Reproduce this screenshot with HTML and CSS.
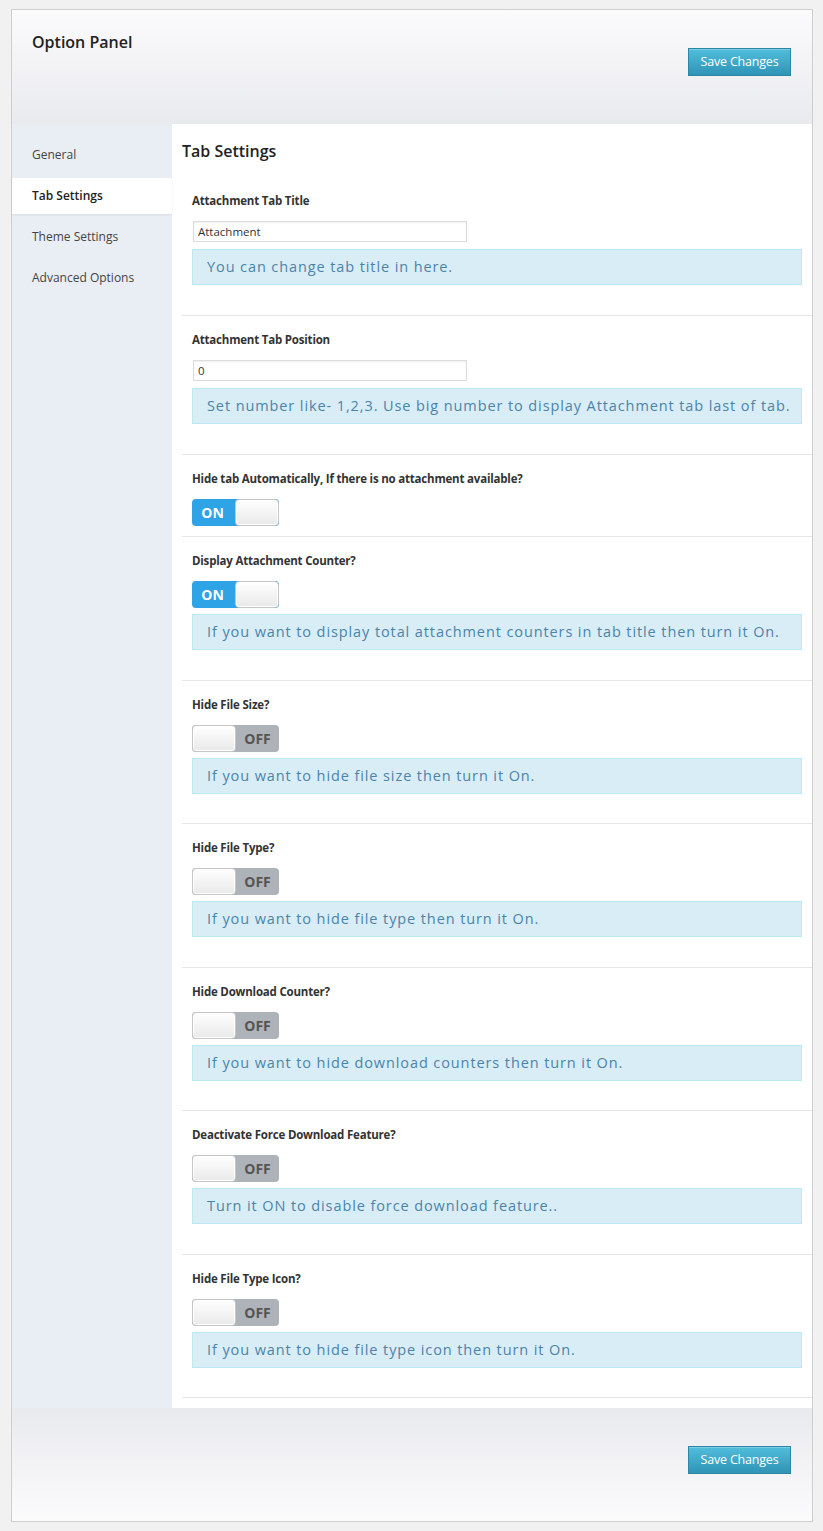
FILE: index.html
```html
<!DOCTYPE html>
<html>
<head>
<meta charset="utf-8">
<title>Option Panel</title>
<link rel="stylesheet" href="styles.css">
</head>
<body>
<div class="panel">
  <header class="panel-header">
    <h1 class="panel-title">Option Panel</h1>
    <button class="btn-save">Save Changes</button>
  </header>
  <div class="panel-body">
    <nav class="sidebar">
      <div class="nav-item">General</div>
      <div class="nav-item active">Tab Settings</div>
      <div class="nav-item">Theme Settings</div>
      <div class="nav-item">Advanced Options</div>
    </nav>
    <main class="content">
      <h2 class="content-title">Tab Settings</h2>

      <section class="field">
        <div class="label">Attachment Tab Title</div>
        <input class="text-input" type="text" value="Attachment">
        <div class="desc">You can change tab title in here.</div>
      </section>

      <section class="field">
        <div class="label">Attachment Tab Position</div>
        <input class="text-input" type="text" value="0">
        <div class="desc">Set number like- 1,2,3. Use big number to display Attachment tab last of tab.</div>
      </section>

      <section class="field">
        <div class="label">Hide tab Automatically, If there is no attachment available?</div>
        <div class="toggle on"><span class="toggle-text">ON</span><span class="knob"></span></div>
      </section>

      <section class="field">
        <div class="label">Display Attachment Counter?</div>
        <div class="toggle on"><span class="toggle-text">ON</span><span class="knob"></span></div>
        <div class="desc">If you want to display total attachment counters in tab title then turn it On.</div>
      </section>

      <section class="field">
        <div class="label">Hide File Size?</div>
        <div class="toggle off"><span class="knob"></span><span class="toggle-text">OFF</span></div>
        <div class="desc">If you want to hide file size then turn it On.</div>
      </section>

      <section class="field">
        <div class="label">Hide File Type?</div>
        <div class="toggle off"><span class="knob"></span><span class="toggle-text">OFF</span></div>
        <div class="desc">If you want to hide file type then turn it On.</div>
      </section>

      <section class="field">
        <div class="label">Hide Download Counter?</div>
        <div class="toggle off"><span class="knob"></span><span class="toggle-text">OFF</span></div>
        <div class="desc">If you want to hide download counters then turn it On.</div>
      </section>

      <section class="field">
        <div class="label">Deactivate Force Download Feature?</div>
        <div class="toggle off"><span class="knob"></span><span class="toggle-text">OFF</span></div>
        <div class="desc">Turn it ON to disable force download feature..</div>
      </section>

      <section class="field">
        <div class="label">Hide File Type Icon?</div>
        <div class="toggle off"><span class="knob"></span><span class="toggle-text">OFF</span></div>
        <div class="desc">If you want to hide file type icon then turn it On.</div>
      </section>
    </main>
  </div>
  <footer class="panel-footer">
    <button class="btn-save">Save Changes</button>
  </footer>
</div>
</body>
</html>
```

FILE: styles.css
```css
* { box-sizing: border-box; }

html, body {
  margin: 0;
  padding: 0;
  background: #f1f1f1;
}

body {
  padding: 9px 10px 9px 11px;
  font-family: "Open Sans", "Noto Sans", "DejaVu Sans", sans-serif;
  color: #333;
}

.panel {
  width: 802px;
  border: 1px solid #cfcfcf;
  background: #fff;
}

.panel-header {
  height: 114px;
  background: linear-gradient(to bottom, #fbfbfc 0%, #e9eaee 100%);
  display: flex;
  justify-content: space-between;
  align-items: flex-start;
  padding: 21px 21px 0 20px;
}

.panel-title {
  margin: 0;
  font-size: 16px;
  font-weight: 600;
  color: #222;
  line-height: 22px;
}

.btn-save {
  margin-top: 17px;
  height: 28px;
  width: 103px;
  padding: 0;
  border: 1px solid #2a87a6;
  border-radius: 0;
  background: linear-gradient(to bottom, #52bddc 0%, #2f94b6 100%);
  color: #fff;
  font-family: "Open Sans", "Noto Sans", sans-serif;
  font-size: 12.5px;
  line-height: 26px;
  letter-spacing: -0.2px;
  box-shadow: inset 0 1px 0 rgba(255,255,255,0.25);
}

.panel-body {
  display: flex;
}

.sidebar {
  width: 160px;
  background: #e9eef5;
  padding-top: 13px;
  display: flex;
  flex-direction: column;
  gap: 5px;
}

.nav-item {
  height: 36px;
  line-height: 36px;
  padding-left: 20px;
  font-size: 12px;
  color: #444;
}

.nav-item.active {
  background: #fff;
  font-weight: 600;
  color: #222;
  box-shadow: 0 1px 2px rgba(0,0,0,0.08);
}

.content {
  flex: 1;
  padding: 16px 0 10px 10px;
}

.content-title {
  margin: 0 0 15px 0;
  font-size: 16px;
  font-weight: 600;
  line-height: 22px;
  color: #222;
}

.field {
  padding: 15px 10px 10px 10px;
  border-bottom: 1px solid #e6e6e6;
}

.label {
  font-size: 11.5px;
  font-weight: 700;
  line-height: 18px;
  color: #333;
  margin-bottom: 11px;
  letter-spacing: -0.2px;
}

.text-input {
  display: block;
  width: 274px;
  height: 21px;
  margin-left: 1px;
  border: 1px solid #dcdcdc;
  box-shadow: inset 0 1px 2px rgba(0,0,0,0.07);
  padding: 0 4px;
  font-family: "Open Sans", "Noto Sans", sans-serif;
  font-size: 11.5px;
  color: #333;
  background: #fff;
}

.desc {
  margin-top: 7px;
  margin-bottom: 20px;
  height: 36px;
  line-height: 34px;
  padding-left: 14px;
  background: #d9edf7;
  border: 1px solid #bce8f1;
  color: #4c84a8;
  font-size: 14.5px;
  letter-spacing: 0.9px;
  white-space: nowrap;
  overflow: hidden;
}

.toggle {
  width: 87px;
  height: 27px;
  border-radius: 4px;
  display: flex;
  overflow: hidden;
  font-family: "Open Sans", "Noto Sans", sans-serif;
  font-weight: 700;
  font-size: 14px;
  line-height: 27px;
}

.toggle + .desc {
  margin-top: 6px;
  margin-bottom: 19.5px;
}

.toggle.on {
  background: #2ea3e5;
}

.toggle.off {
  background: #adb3b9;
}

.toggle-text {
  width: 43px;
  text-align: center;
}

.toggle.on .toggle-text {
  color: #fff;
  padding-right: 2px;
}

.toggle.off .toggle-text {
  color: #555;
}

.knob {
  width: 44px;
  height: 27px;
  border: 1px solid #c4c6c8;
  border-radius: 4px;
  background: linear-gradient(to bottom, #ffffff 0%, #e9e9e9 100%);
  box-shadow: inset 0 0 0 1px #fff;
}

.panel-footer {
  height: 113px;
  background: linear-gradient(to bottom, #e9eaee 0%, #fbfbfc 100%);
  display: flex;
  justify-content: flex-end;
  align-items: flex-start;
  padding: 21px 21px 0 20px;
}
```
